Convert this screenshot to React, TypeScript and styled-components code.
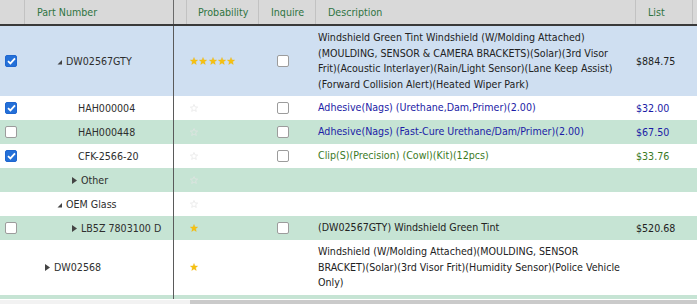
import React from "react";
import styled, { createGlobalStyle } from "styled-components";

const Global = createGlobalStyle`
  html, body { margin: 0; padding: 0; background: #ffffff; }
  body { font-family: "DejaVu Sans Condensed", "DejaVu Sans", Verdana, sans-serif; }
`;

const COLS = "25px 149px 12px 73px 57px 320px 57px 1fr";

const Grid = styled.div`
  width: 697px;
  height: 304px;
  display: flex;
  flex-direction: column;
  overflow: hidden;
  font-size: 10.6px;
  color: #333;
`;

const HeaderRow = styled.div`
  display: grid;
  grid-template-columns: ${COLS};
  height: 24px;
  background: #d9d9d9;
  border-bottom: 2px solid #3a3a3a;
  flex: none;
`;

const HeaderCell = styled.div<{ $dark?: boolean }>`
  display: flex;
  align-items: center;
  padding-left: 12px;
  color: #2f7442;
  border-right: 1px solid ${(p) => (p.$dark ? "#6a6a6a" : "#c2c2c2")};
  white-space: nowrap;
  overflow: hidden;
`;

const Body = styled.div`
  flex: 1;
  overflow: hidden;
  display: flex;
  flex-direction: column;
`;

const Row = styled.div<{ $bg: string }>`
  display: grid;
  grid-template-columns: ${COLS};
  min-height: 24px;
  background: ${(p) => p.$bg};
  flex: none;
`;

const Cell = styled.div<{ $pl?: number }>`
  display: flex;
  align-items: center;
  padding-left: ${(p) => p.$pl ?? 0}px;
  white-space: nowrap;
`;

const PartCell = styled(Cell)`
  border-right: 1px solid #5a5a5a;
  color: #2e2e2e;
  gap: 4px;
`;

const DescCell = styled.div<{ $color: string }>`
  padding: 4px 2px 4px 2px;
  line-height: 15.5px;
  color: ${(p) => p.$color};
  display: flex;
  flex-direction: column;
  justify-content: center;
`;

const Line = styled.span`
  display: block;
  white-space: nowrap;
`;

const PriceCell = styled(Cell)<{ $color: string }>`
  color: ${(p) => p.$color};
  padding-left: 0;
`;

const Box = styled.span<{ $checked?: boolean }>`
  width: 12px;
  height: 12px;
  box-sizing: border-box;
  border-radius: 2px;
  border: 1px solid ${(p) => (p.$checked ? "#1f66cf" : "#9c9c9c")};
  background: ${(p) => (p.$checked ? "#2470d8" : "#ffffff")};
  display: flex;
  align-items: center;
  justify-content: center;
`;

const Stars = styled.div`
  display: flex;
  gap: 1.3px;
`;

const Filler = styled.div`
  height: 4px;
  background: #c6e4d4;
  flex: none;
  display: grid;
  grid-template-columns: 174px 1fr;
`;

const FillerDivider = styled.div`
  border-right: 1px solid #5a5a5a;
`;

const ScrollBar = styled.div`
  height: 4px;
  flex: none;
  display: grid;
  grid-template-columns: 190px 1fr;
  background: #f2f2f2;
`;

const Thumb = styled.div`
  background: #cacaca;
`;

const Checkbox = ({ checked }: { checked?: boolean }) => (
  <Box $checked={checked}>
    {checked && (
      <svg width="9" height="8" viewBox="0 0 9 8">
        <path d="M1 4.2 L3.4 6.4 L8 1.4" fill="none" stroke="#fff" strokeWidth="1.8" />
      </svg>
    )}
  </Box>
);

const Star = ({ filled }: { filled: boolean }) => (
  <svg width="8" height="8" viewBox="0 0 24 24">
    <polygon
      points="12,1.5 15,8.8 23,9.3 16.9,14.4 18.9,22.3 12,18 5.1,22.3 7.1,14.4 1,9.3 9,8.8"
      fill={filled ? "#f6c10f" : "none"}
      stroke={filled ? "#f0b400" : "#e4e4e4"}
      strokeWidth={filled ? 1 : 2}
    />
  </svg>
);

const Toggle = ({ open }: { open: boolean }) =>
  open ? (
    <svg width="5" height="8" viewBox="0 0 5 8">
      <polygon points="5,3 5,7.5 0.5,7.5" fill="#444" />
    </svg>
  ) : (
    <svg width="5" height="7" viewBox="0 0 5 7">
      <polygon points="0,0 5,3.5 0,7" fill="#444" />
    </svg>
  );

type RowData = {
  check?: boolean | null;
  part: string;
  toggle?: "open" | "closed";
  indent: number;
  stars: number;
  inquire: boolean;
  desc: string[];
  descColor: string;
  price?: string;
  priceColor: string;
  bg: string;
};

const BLUE = "#cfdff1";
const GREEN = "#c6e4d4";
const WHITE = "#ffffff";

const rows: RowData[] = [
  {
    check: true,
    part: "DW02567GTY",
    toggle: "open",
    indent: 32,
    stars: 5,
    inquire: true,
    desc: [
      "Windshield Green Tint Windshield (W/Molding Attached)",
      "(MOULDING, SENSOR & CAMERA BRACKETS)(Solar)(3rd Visor",
      "Frit)(Acoustic Interlayer)(Rain/Light Sensor)(Lane Keep Assist)",
      "(Forward Collision Alert)(Heated Wiper Park)",
    ],
    descColor: "#222",
    price: "$884.75",
    priceColor: "#222",
    bg: BLUE,
  },
  {
    check: true,
    part: "HAH000004",
    indent: 53,
    stars: 0,
    inquire: true,
    desc: ["Adhesive(Nags) (Urethane,Dam,Primer)(2.00)"],
    descColor: "#1c1ca6",
    price: "$32.00",
    priceColor: "#1c1ca6",
    bg: WHITE,
  },
  {
    check: false,
    part: "HAH000448",
    indent: 53,
    stars: 0,
    inquire: true,
    desc: ["Adhesive(Nags) (Fast-Cure Urethane/Dam/Primer)(2.00)"],
    descColor: "#1c1ca6",
    price: "$67.50",
    priceColor: "#1c1ca6",
    bg: GREEN,
  },
  {
    check: true,
    part: "CFK-2566-20",
    indent: 53,
    stars: 0,
    inquire: true,
    desc: ["Clip(S)(Precision) (Cowl)(Kit)(12pcs)"],
    descColor: "#3b7a1f",
    price: "$33.76",
    priceColor: "#3b7a1f",
    bg: WHITE,
  },
  {
    check: null,
    part: "Other",
    toggle: "closed",
    indent: 47,
    stars: 0,
    inquire: false,
    desc: [],
    descColor: "#222",
    priceColor: "#222",
    bg: GREEN,
  },
  {
    check: null,
    part: "OEM Glass",
    toggle: "open",
    indent: 32,
    stars: 0,
    inquire: false,
    desc: [],
    descColor: "#222",
    priceColor: "#222",
    bg: WHITE,
  },
  {
    check: false,
    part: "LB5Z 7803100 D",
    toggle: "closed",
    indent: 47,
    stars: 1,
    inquire: true,
    desc: ["(DW02567GTY) Windshield Green Tint"],
    descColor: "#222",
    price: "$520.68",
    priceColor: "#222",
    bg: GREEN,
  },
  {
    check: null,
    part: "DW02568",
    toggle: "closed",
    indent: 20,
    stars: 1,
    inquire: false,
    desc: [
      "Windshield (W/Molding Attached)(MOULDING, SENSOR",
      "BRACKET)(Solar)(3rd Visor Frit)(Humidity Sensor)(Police Vehicle",
      "Only)",
    ],
    descColor: "#222",
    priceColor: "#222",
    bg: WHITE,
  },
];

export default function App() {
  return (
    <>
      <Global />
      <Grid>
        <HeaderRow>
          <HeaderCell />
          <HeaderCell $dark>Part Number</HeaderCell>
          <HeaderCell />
          <HeaderCell>Probability</HeaderCell>
          <HeaderCell>Inquire</HeaderCell>
          <HeaderCell>Description</HeaderCell>
          <HeaderCell>List</HeaderCell>
          <HeaderCell />
        </HeaderRow>
        <Body>
          {rows.map((r, i) => (
            <Row key={i} $bg={r.bg}>
              <Cell $pl={5}>{r.check !== null && r.check !== undefined ? <Checkbox checked={r.check} /> : null}</Cell>
              <PartCell $pl={r.indent}>
                {r.toggle && <Toggle open={r.toggle === "open"} />}
                <span>{r.part}</span>
              </PartCell>
              <Cell />
              <Cell $pl={4}>
                <Stars>
                  {r.stars === 0 ? (
                    <Star filled={false} />
                  ) : (
                    Array.from({ length: r.stars }).map((_, k) => <Star key={k} filled />)
                  )}
                </Stars>
              </Cell>
              <Cell $pl={18}>{r.inquire && <Checkbox />}</Cell>
              <DescCell $color={r.descColor}>
                {r.desc.map((l, k) => (
                  <Line key={k}>{l}</Line>
                ))}
              </DescCell>
              <PriceCell $color={r.priceColor}>{r.price}</PriceCell>
              <Cell />
            </Row>
          ))}
          <Filler>
            <FillerDivider />
          </Filler>
        </Body>
        <ScrollBar>
          <div />
          <Thumb />
        </ScrollBar>
      </Grid>
    </>
  );
}
